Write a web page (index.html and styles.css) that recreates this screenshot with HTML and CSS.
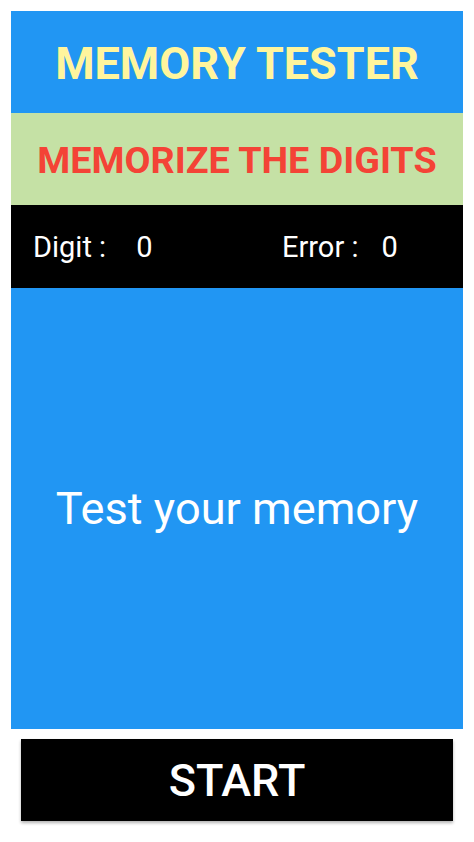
FILE: index.html
```html
<!DOCTYPE html>
<html lang="en">
<head>
    <meta charset="UTF-8">
    <meta name="viewport" content="width=device-width, initial-scale=1.0">
    <title>Memory Tester</title>
    <link rel="stylesheet" href="styles.css">
</head>
<body>
    <div class="panel">
        <div class="title">MEMORY TESTER</div>
        <div class="subtitle">MEMORIZE THE DIGITS</div>
        <div class="stats">
            <div class="stat">Digit :<span class="value">0</span></div>
            <div class="stat error">Error :<span class="value">0</span></div>
        </div>
        <div class="board">Test your memory</div>
    </div>
    <button class="start">START</button>
</body>
</html>
```

FILE: styles.css
```css
body {
    font-family: Roboto, "Noto Sans", sans-serif;
    margin: 0;
    padding: 11px 11px 0;
    background: #fff;
    height: 842px;
    box-sizing: border-box;
}
.panel {
    display: flex;
    flex-direction: column;
}
.title {
    background: #2196f3;
    color: #fff59d;
    font-size: 45px;
    font-weight: bold;
    height: 102px;
    padding-top: 2px;
    box-sizing: border-box;
    display: flex;
    justify-content: center;
    align-items: center;
}
.subtitle {
    background: #c5e1a5;
    color: #f44336;
    font-size: 37.7px;
    font-weight: bold;
    height: 92px;
    padding-top: 2px;
    box-sizing: border-box;
    display: flex;
    justify-content: center;
    align-items: center;
}
.stats {
    background: #000;
    color: #fff;
    height: 83px;
    display: grid;
    grid-template-columns: 249px auto;
    align-items: center;
    padding: 0 22px;
    font-size: 29px;
}
.stat .value {
    margin-left: 30px;
}
.stat.error .value {
    margin-left: 23px;
}
.board {
    background: #2196f3;
    color: #fff;
    height: 441px;
    display: flex;
    justify-content: center;
    align-items: center;
    font-size: 45.2px;
}
.start {
    display: block;
    width: 432px;
    height: 82px;
    margin: 10px auto 0;
    border: none;
    background: #000;
    color: #fff;
    font-family: Roboto, "Noto Sans", sans-serif;
    font-size: 45px;
    font-weight: 500;
    box-shadow: 0 2px 3px rgba(0, 0, 0, 0.3);
}
```
